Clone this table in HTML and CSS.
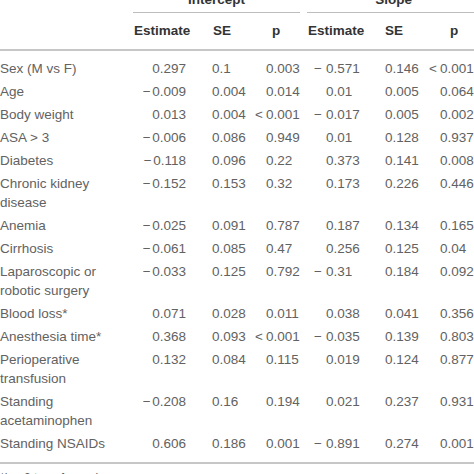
FILE: index.html
```html
<!DOCTYPE html>
<html>
<head>
<meta charset="utf-8">
<link rel="stylesheet" href="styles.css">
</head>
<body>
<div class="crop">
<table class="tbl">
  <colgroup>
    <col class="w0"><col class="w1"><col class="w2"><col class="w3"><col class="w4"><col class="w5"><col class="w6">
  </colgroup>
  <thead>
    <tr class="grow">
      <th></th>
      <th colspan="3" class="grp"><div class="gl gl-int">Intercept</div></th>
      <th colspan="3" class="grp"><div class="gl">Slope</div></th>
    </tr>
    <tr class="hrow">
      <th></th>
      <th class="h1">Estimate</th>
      <th class="h2">SE</th>
      <th class="h3">p</th>
      <th class="h4">Estimate</th>
      <th class="h5">SE</th>
      <th class="h6">p</th>
    </tr>
  </thead>
  <tbody>
    <tr class="first"><td class="lab">Sex (M vs F)</td><td class="c1">0.297</td><td class="c2">0.1</td><td class="c3">0.003</td><td class="c4"><span class="neg">&minus;</span>0.571</td><td class="c5">0.146</td><td class="c6"><span class="lt">&lt;</span>0.001</td></tr>
    <tr><td class="lab">Age</td><td class="c1"><span class="mn">&minus;</span>0.009</td><td class="c2">0.004</td><td class="c3">0.014</td><td class="c4">0.01</td><td class="c5">0.005</td><td class="c6">0.064</td></tr>
    <tr><td class="lab">Body weight</td><td class="c1">0.013</td><td class="c2">0.004</td><td class="c3"><span class="lt">&lt;</span>0.001</td><td class="c4"><span class="neg">&minus;</span>0.017</td><td class="c5">0.005</td><td class="c6">0.002</td></tr>
    <tr><td class="lab">ASA &gt; 3</td><td class="c1"><span class="mn">&minus;</span>0.006</td><td class="c2">0.086</td><td class="c3">0.949</td><td class="c4">0.01</td><td class="c5">0.128</td><td class="c6">0.937</td></tr>
    <tr><td class="lab">Diabetes</td><td class="c1"><span class="mn">&minus;</span>0.118</td><td class="c2">0.096</td><td class="c3">0.22</td><td class="c4">0.373</td><td class="c5">0.141</td><td class="c6">0.008</td></tr>
    <tr><td class="lab">Chronic kidney disease</td><td class="c1"><span class="mn">&minus;</span>0.152</td><td class="c2">0.153</td><td class="c3">0.32</td><td class="c4">0.173</td><td class="c5">0.226</td><td class="c6">0.446</td></tr>
    <tr><td class="lab">Anemia</td><td class="c1"><span class="mn">&minus;</span>0.025</td><td class="c2">0.091</td><td class="c3">0.787</td><td class="c4">0.187</td><td class="c5">0.134</td><td class="c6">0.165</td></tr>
    <tr><td class="lab">Cirrhosis</td><td class="c1"><span class="mn">&minus;</span>0.061</td><td class="c2">0.085</td><td class="c3">0.47</td><td class="c4">0.256</td><td class="c5">0.125</td><td class="c6">0.04</td></tr>
    <tr><td class="lab">Laparoscopic or robotic surgery</td><td class="c1"><span class="mn">&minus;</span>0.033</td><td class="c2">0.125</td><td class="c3">0.792</td><td class="c4"><span class="neg">&minus;</span>0.31</td><td class="c5">0.184</td><td class="c6">0.092</td></tr>
    <tr><td class="lab">Blood loss*</td><td class="c1">0.071</td><td class="c2">0.028</td><td class="c3">0.011</td><td class="c4">0.038</td><td class="c5">0.041</td><td class="c6">0.356</td></tr>
    <tr><td class="lab">Anesthesia time*</td><td class="c1">0.368</td><td class="c2">0.093</td><td class="c3"><span class="lt">&lt;</span>0.001</td><td class="c4"><span class="neg">&minus;</span>0.035</td><td class="c5">0.139</td><td class="c6">0.803</td></tr>
    <tr><td class="lab">Perioperative transfusion</td><td class="c1">0.132</td><td class="c2">0.084</td><td class="c3">0.115</td><td class="c4">0.019</td><td class="c5">0.124</td><td class="c6">0.877</td></tr>
    <tr><td class="lab">Standing acetaminophen</td><td class="c1"><span class="mn">&minus;</span>0.208</td><td class="c2">0.16</td><td class="c3">0.194</td><td class="c4">0.021</td><td class="c5">0.237</td><td class="c6">0.931</td></tr>
    <tr class="last"><td class="lab">Standing NSAIDs</td><td class="c1">0.606</td><td class="c2">0.186</td><td class="c3">0.001</td><td class="c4"><span class="neg">&minus;</span>0.891</td><td class="c5">0.274</td><td class="c6">0.001</td></tr>
  </tbody>
</table>
<div class="foot">*log 2 transformed</div>
</div>
</body>
</html>
```

FILE: styles.css
```css
html, body {
  margin: 0;
  padding: 0;
  background: #ffffff;
}
body {
  width: 474px;
  height: 474px;
  overflow: hidden;
  font-family: "Liberation Sans", Arial, Helvetica, sans-serif;
  font-size: 13.5px;
  color: #626262;
}
.crop {
  margin-top: -10.4px;
}
.tbl {
  border-collapse: collapse;
  table-layout: fixed;
  width: 480px;
  line-height: 19px;
}
.w0 { width: 133px; }
.w1 { width: 67px; }
.w2 { width: 50px; }
.w3 { width: 57px; }
.w4 { width: 65px; }
.w5 { width: 53px; }
.w6 { width: 55px; }

th, td {
  padding: 0;
  white-space: nowrap;
  vertical-align: top;
}
th {
  font-weight: bold;
  color: #333333;
  text-align: left;
}
.grp {
  text-align: center;
  padding: 0;
}
.gl {
  padding-top: 0.5px;
  padding-bottom: 3px;
  border-bottom: 1px solid #bdbdbd;
}
.gl-int {
  margin-right: 7px;
}
.hrow th {
  padding-top: 7.8px;
  padding-bottom: 8.6px;
  border-bottom: 2px solid #c6c6c6;
}
.hrow .h1 { padding-left: 1px; }
.hrow .h2 { padding-left: 13px; }
.hrow .h3 { padding-left: 22px; }
.hrow .h4 { padding-left: 1px; }
.hrow .h5 { padding-left: 13px; }
.hrow .h6 { padding-left: 25px; }

td {
  padding-top: 2px;
  padding-bottom: 2px;
}
td.lab {
  white-space: normal;
  padding-right: 8px;
}
tr.first td { padding-top: 8.8px; }
tr.last td {
  padding-bottom: 9px;
  border-bottom: 2px solid #c6c6c6;
}
.c1 { text-align: right; padding-right: 14px; }
.c2 { padding-left: 12px; }
.c3 { padding-left: 16px; }
.c4 { padding-left: 19px; }
.c5 { padding-left: 13px; }
.c6 { padding-left: 15px; }

.mn {
  margin-right: 1.5px;
}
.neg {
  display: inline-block;
  width: 12px;
  margin-left: -12px;
}
.lt {
  display: inline-block;
  width: 11px;
  margin-left: -11px;
}
.foot {
  margin-top: 6px;
  font-size: 12px;
  line-height: 16px;
}
```
